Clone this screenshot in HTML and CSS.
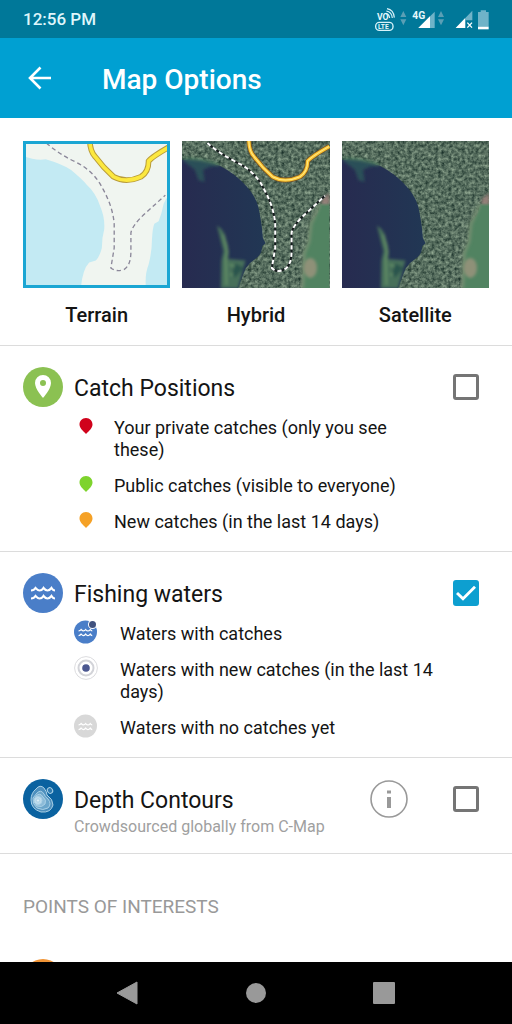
FILE: index.html
```html
<!DOCTYPE html>
<html lang="en">
<head>
<meta charset="utf-8">
<meta name="viewport" content="width=device-width, initial-scale=1">
<title>Map Options</title>
<link rel="stylesheet" href="styles.css">
</head>
<body>
<div class="status">
  <span>12:56 PM</span>
  <svg class="status-icons" viewBox="36 15 360 81" aria-hidden="true">
    <g fill="none" stroke="#d8f3fa" stroke-width="4">
      <rect x="47" y="64" width="52" height="24" rx="11"/>
      <path d="M77 37q10 1 12 14M79 30q16 2 18 21M81 23q20 3 22 27" stroke-width="3.500"/>
    </g>
    <g class="status-glyphs">
      <text x="51" y="58" font-size="26">VO</text>
      <text x="54" y="83" font-size="20">LTE</text>
      <text x="157" y="53" font-size="31">4G</text>
    </g>
    <path d="M130 30l9 18h-18zM130 73l9-18h-18zM243 30l9 18h-18zM243 73l9-18h-18z" fill="#5a9fb5"/>
    <path d="M224 32v49h-49z" fill="#6fb3c8"/>
    <path d="M210 46v35h-35z" fill="#fff"/>
    <path d="M337 29v29h-20v23h-30z" fill="#6fb3c8"/>
    <path d="M315 52v29h-28z" fill="#fff"/>
    <path d="M322 65l14 15M336 65l-14 15" stroke="#fff" stroke-width="4"/>
    <path d="M362 33v-5h16v5h8v44h-32v-44z" fill="#6fb3c8"/>
    <path d="M354 77h32v8h-32z" fill="#fff"/>
  </svg>
</div>

<header class="appbar">
  <button class="back" type="button" aria-label="Back">
    <svg viewBox="0 0 24 24"><path d="M23 12H2M12.500 1.500L2 12l10.500 10.500" fill="none" stroke="#fff" stroke-width="2.600"/></svg>
  </button>
  <h1>Map Options</h1>
</header>

<main>
  <div class="styles" role="radiogroup" aria-label="Map style">
    <label class="style">
      <input type="radio" name="style" checked>
      <svg viewBox="22 20 441 441" aria-hidden="true">
        <path d="M22 20h441v441H22z" fill="#f0f5f0"/>
        <path d="M22 64Q60 80 90 75Q135 88 165 106Q200 135 212 150Q240 175 253 215Q268 250 265 285Q258 310 258 340Q252 365 240 378L220 384Q200 405 195 461H22z" fill="#c3eaf3"/>
        <path d="M463 180V461H390Q386 420 398 390Q408 350 408 315Q410 280 415 268L428 260Q438 235 443 208Q450 190 463 180z" fill="#c3eaf3"/>
        <path d="M92 26Q130 60 180 83Q235 110 262 165Q292 220 295 270V340L285 400Q300 412 322 406Q345 395 345 350V295Q350 270 390 235L448 182" fill="none" stroke="#8b8799" stroke-width="4" stroke-dasharray="13 9"/>
        <path d="M222 15Q222 50 238 67Q262 100 293 127Q330 147 375 127Q398 113 398 80Q410 66 463 36" fill="none" stroke="#b99c3a" stroke-width="17"/>
        <path d="M222 15Q222 50 238 67Q262 100 293 127Q330 147 375 127Q398 113 398 80Q410 66 463 36" fill="none" stroke="#fce83f" stroke-width="11"/>
      </svg>
      <span>Terrain</span>
    </label>
    <label class="style">
      <input type="radio" name="style">
      <svg viewBox="22 20 441 441" aria-hidden="true">
        <defs>
          <filter id="trees" x="0" y="0" width="1" height="1" color-interpolation-filters="sRGB">
            <feTurbulence type="fractalNoise" baseFrequency="0.1" numOctaves="3" seed="8"/>
            <feColorMatrix values=".6 0 0 0 .04  .6 0 0 0 .13  .52 0 0 0 .11  0 0 0 0 1"/>
          </filter>
          <filter id="soft"><feGaussianBlur stdDeviation="4"/></filter>
          <linearGradient id="lake" x1="0" y1="0" x2="1" y2="0">
            <stop offset="0" stop-color="#272b50"/><stop offset="1" stop-color="#213754"/>
          </linearGradient>
          <g id="satellite">
            <path d="M22 20h441v441H22z" fill="#566e60" filter="url(#trees)"/>
            <path d="M22 76Q90 78 135 94Q180 118 205 145Q240 180 250 215Q262 270 264 310L272 326L262 335Q262 360 240 374Q222 385 212 402L190 461H22z" fill="url(#lake)"/>
            <g filter="url(#soft)">
              <path d="M22 76Q85 72 132 94L105 97L85 106L90 142L72 138L60 105L32 84z" fill="#2c5058"/>
              <path d="M26 72Q70 70 134 91" fill="none" stroke="#4f7b5f" stroke-width="6"/>
              <path d="M127 274Q147 285 152 310Q165 340 160 373L212 378L205 402L190 461H138L140 378L146 350z" fill="#47705a"/>
              <path d="M146 300l12 50-5 22 2 80M165 390l20 8-18 25" fill="none" stroke="#648f66" stroke-width="6"/>
              <path d="M182 386l25 14-27 30-8-18z" fill="#2c554d"/>
            </g>
            <path d="M463 208h-26L426 240L406 265L401 320L386 355L383 461H463z" fill="#518361"/>
            <path d="M463 176l-20 15-6 18h26z" fill="#947f78" filter="url(#soft)"/>
            <path d="M434 210L408 268L402 320L388 355L383 461" fill="none" stroke="#728c70" stroke-width="10" filter="url(#soft)"/>
            <ellipse cx="406" cy="400" rx="20" ry="30" fill="#8f9178" filter="url(#soft)"/>
          </g>
        </defs>
        <use href="#satellite"/>
        <g fill="none">
          <path d="M98 26Q130 55 184 83Q242 110 268 165Q298 220 301 270V340L291 400Q305 415 325 406Q350 395 350 350V295Q355 270 395 235L450 184" stroke="#141a1c" stroke-width="6"/>
          <path d="M98 26Q130 55 184 83Q242 110 268 165Q298 220 301 270V340L291 400Q305 415 325 406Q350 395 350 350V295Q355 270 395 235L450 184" stroke="#fff" stroke-width="6" stroke-dasharray="13 9"/>
          <path d="M222 15Q222 50 238 67Q262 100 293 127Q330 147 375 127Q398 113 398 80Q410 66 463 36" stroke="#7a5525" stroke-width="15"/>
          <path d="M222 15Q222 50 238 67Q262 100 293 127Q330 147 375 127Q398 113 398 80Q410 66 463 36" stroke="#fcc732" stroke-width="10"/>
          <path d="M222 15Q222 50 238 67Q262 100 293 127Q330 147 375 127Q398 113 398 80Q410 66 463 36" stroke="#ffe78a" stroke-width="3"/>
        </g>
      </svg>
      <span>Hybrid</span>
    </label>
    <label class="style">
      <input type="radio" name="style">
      <svg viewBox="22 20 441 441" aria-hidden="true"><use href="#satellite"/></svg>
      <span>Satellite</span>
    </label>
  </div>

  <section class="layer">
    <div class="head">
      <svg class="badge" viewBox="0 0 40 40" aria-hidden="true">
        <circle cx="20" cy="20" r="20" fill="#8bc152"/>
        <path fill="#fff" fill-rule="evenodd" d="M20 8a8 8 0 0 0-8 8c0 6 8 15 8 15s8-9 8-15a8 8 0 0 0-8-8zm0 5a3 3 0 1 1 0 6 3 3 0 0 1 0-6z"/>
      </svg>
      <label for="catch">Catch Positions</label>
      <input type="checkbox" id="catch">
    </div>
    <ul>
      <li><svg viewBox="0 0 24 24" fill="#d0021b"><path d="M12 4C8 4 5.500 7 5.500 10.500C5.500 14 9 17 12 20C15 17 18.500 14 18.500 10.500C18.500 7 16 4 12 4z"/></svg><span>Your private catches (only you see these)</span></li>
      <li><svg viewBox="0 0 24 24" fill="#7ed32d"><path d="M12 4C8 4 5.500 7 5.500 10.500C5.500 14 9 17 12 20C15 17 18.500 14 18.500 10.500C18.500 7 16 4 12 4z"/></svg><span>Public catches (visible to everyone)</span></li>
      <li><svg viewBox="0 0 24 24" fill="#f5a126"><path d="M12 4C8 4 5.500 7 5.500 10.500C5.500 14 9 17 12 20C15 17 18.500 14 18.500 10.500C18.500 7 16 4 12 4z"/></svg><span>New catches (in the last 14 days)</span></li>
    </ul>
  </section>

  <section class="layer">
    <div class="head">
      <svg class="badge" viewBox="0 0 40 40" aria-hidden="true">
        <circle cx="20" cy="20" r="20" fill="#4a7ec8"/>
        <path id="waves" d="M8 17.500Q11 17.500 12.500 15Q15 17.500 16.500 17.500Q19 17.500 20.500 15Q22.500 17.500 24.500 17.500Q26.500 17.500 28.500 15Q30 17.500 32 17.500M8 25.500Q11 25.500 12.500 23Q15 25.500 16.500 25.500Q19 25.500 20.500 23Q22.500 25.500 24.500 25.500Q26.500 25.500 28.500 23Q30 25.500 32 25.500" fill="none" stroke="#fff" stroke-width="2.200"/>
      </svg>
      <label for="waters">Fishing waters</label>
      <input type="checkbox" id="waters" checked>
    </div>
    <ul class="wide">
      <li><svg viewBox="0 0 24 24"><circle cx="11.500" cy="12" r="11.500" fill="#4a7ec8"/><use href="#waves" transform="translate(0 1) scale(.57)"/><circle cx="18.500" cy="4.500" r="4.500" fill="#fff"/><circle cx="18.500" cy="4.500" r="3.500" fill="#40517e"/></svg><span>Waters with catches</span></li>
      <li><svg viewBox="0 0 24 24"><circle cx="12" cy="12" r="11.400" fill="#fff" stroke="#dcdcdf"/><circle cx="12" cy="12" r="7.500" fill="#fff" stroke="#d2d3d8" stroke-width="2"/><circle cx="12" cy="12" r="3.800" fill="#4b5790"/></svg><span>Waters with new catches (in the last 14 days)</span></li>
      <li><svg viewBox="0 0 24 24"><circle cx="11.500" cy="12" r="11.500" fill="#d8d8d8"/><use href="#waves" transform="translate(0 1) scale(.57)"/></svg><span>Waters with no catches yet</span></li>
    </ul>
  </section>

  <section class="layer">
    <div class="head">
      <svg class="badge" viewBox="0 0 40 40" aria-hidden="true">
        <circle cx="20" cy="20" r="20" fill="#0a62a0"/>
        <g stroke="#a9d0e6" stroke-width="1">
          <path d="M13 10Q17 5 21 9Q24 13 24 16Q30 20 30 26Q28 34 18 33Q8 30 8 21Q8 14 13 10z" fill="#4d8fbd"/>
          <path d="M14 14Q18 10 21 15Q22 18 25 20Q29 25 25 29Q20 32 14 29Q9 25 10 19z" fill="#6ca6cb"/>
          <path d="M13 17Q17 13 20 18Q24 21 22 25Q19 29 14 27Q10 22 13 17z" fill="#8dbbd8"/>
          <circle cx="15" cy="21.500" r="4" fill="#c0dcec"/>
          <circle cx="15" cy="21.500" r="1.700" fill="#ddeef6"/>
          <ellipse cx="27" cy="11.500" rx="2.500" ry="3" fill="#2f7bb0" transform="rotate(-35 27 11.500)"/>
        </g>
      </svg>
      <label for="depth">Depth Contours</label>
      <button class="info" type="button" aria-label="About depth contours">
        <svg viewBox="0 0 38 38"><circle cx="19" cy="19" r="18" fill="none" stroke="#999" stroke-width="1.600"/><path d="M17 10.500h4v3h-4zM17 17h4v11h-4z" fill="#999"/></svg>
      </button>
      <input type="checkbox" id="depth">
    </div>
    <p>Crowdsourced globally from C-Map</p>
  </section>

  <section class="poi">
    <h2>POINTS OF INTERESTS</h2>
    <svg class="badge" viewBox="0 0 40 40" aria-hidden="true"><circle cx="20" cy="20" r="20" fill="#f09436"/></svg>
  </section>
</main>

<nav class="system" aria-label="System">
  <button type="button" aria-label="Back"><svg viewBox="0 0 24 24"><path d="M21 1v22L1 12z" stroke-width="1" stroke="#999" stroke-linejoin="round"/></svg></button>
  <button type="button" aria-label="Home"><svg viewBox="0 0 24 24"><circle cx="12" cy="12" r="10"/></svg></button>
  <button type="button" aria-label="Recents"><svg viewBox="0 0 24 24"><rect x="1" y="1" width="22" height="22" rx="1"/></svg></button>
</nav>
</body>
</html>
```
FILE: styles.css
```css
* { box-sizing: border-box; }

body {
  margin: 0;
  height: 100vh;
  display: flex;
  flex-direction: column;
  background: #fff;
  color: #141414;
  font-family: Roboto, "Liberation Sans", sans-serif;
}

svg { display: block; }

button {
  padding: 0;
  border: 0;
  background: none;
}

.status {
  flex: none;
  height: 38px;
  padding: 0 20px 0 23px;
  display: flex;
  align-items: center;
  justify-content: space-between;
  background: #007899;
  color: #dff6fb;
  font-size: 17px;
  font-weight: 500;
}

.status-icons { width: 120px; height: 27px; }
.status-glyphs { fill: #e6f8fc; font-weight: 700; }

.appbar {
  flex: none;
  height: 80px;
  padding: 0 28px;
  display: flex;
  align-items: center;
  gap: 50px;
  background: #00a0d2;
  color: #fff;
}

.back svg { width: 24px; height: 24px; }

h1 {
  margin: 0;
  padding-top: 2px;
  font-size: 28px;
  font-weight: 500;
}

main {
  flex: 1;
  min-height: 0;
  overflow: hidden;
}

.styles {
  display: grid;
  grid-template-columns: repeat(3, 1fr);
  gap: 12px;
  padding: 23px 23px 18px;
  border-bottom: 1px solid #dcdcdc;
}

.style {
  text-align: center;
  font-size: 20px;
  font-weight: 500;
  line-height: 24px;
}

.style input {
  position: absolute;
  opacity: 0;
}

.style svg { width: 100%; margin-bottom: 15px; }

.style input:checked + svg {
  outline: 3px solid #1ba6d3;
  outline-offset: -3px;
}

.layer {
  padding: 21px 23px 18px;
  border-bottom: 1px solid #dcdcdc;
}

.head {
  display: flex;
  align-items: center;
  padding-right: 10px;
}

.badge { width: 40px; height: 40px; }

.head label {
  flex: 1;
  margin-left: 11px;
  padding-top: 2px;
  font-size: 23px;
}

.info { margin-right: 45px; }
.info svg { width: 38px; height: 38px; }

input[type="checkbox"] {
  appearance: none;
  width: 26px;
  height: 26px;
  margin: 0;
  border: 3px solid #757575;
  border-radius: 3px;
}

input[type="checkbox"]:checked {
  border-color: #0d9fd0;
  background: #0d9fd0;
}

input[type="checkbox"]:checked::after {
  content: "";
  display: block;
  height: 20px;
  background: #fff;
  clip-path: polygon(0 53%, 10% 43%, 35% 67%, 90% 12%, 100% 22%, 35% 87%);
}

ul {
  margin: 10px 60px 0 51px;
  padding: 0;
  list-style: none;
  display: grid;
  gap: 14px;
  font-size: 18px;
  line-height: 22px;
}

ul.wide { margin-right: 40px; }

li { display: flex; gap: 16px; }
.wide li { gap: 22px; }

li svg {
  flex: none;
  width: 24px;
  height: 24px;
  margin-top: -3px;
}

.layer p {
  margin: 0 0 0 51px;
  color: #a0a0a0;
  font-size: 16px;
  line-height: 16px;
}

.poi { padding: 43px 23px 0; }

h2 {
  margin: 0 0 42px;
  color: #999;
  font-size: 19px;
  font-weight: 400;
  line-height: 20px;
}

.system {
  flex: none;
  height: 62px;
  padding: 0 64px;
  display: grid;
  grid-template-columns: repeat(3, 1fr);
  place-items: center;
  background: #000;
}

.system svg { width: 24px; height: 24px; fill: #999; }
```
